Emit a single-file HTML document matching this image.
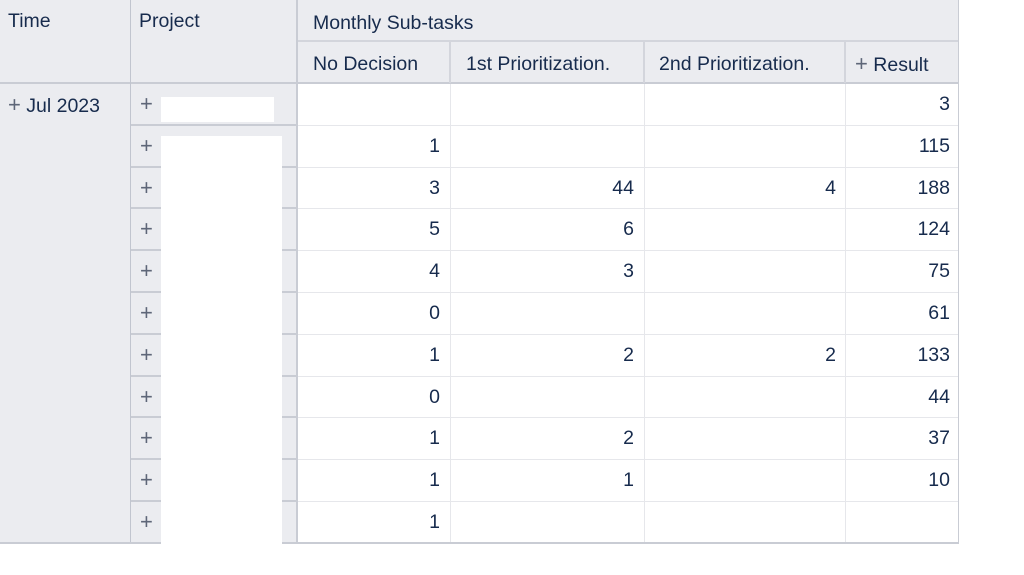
<!DOCTYPE html>
<html><head><style>
body{margin:0;width:1024px;height:575px;background:#fff;font-family:"Liberation Sans",sans-serif;color:#172b4d;position:relative;overflow:hidden}
div{position:absolute;box-sizing:border-box}
.t{font-size:19.5px;line-height:22px;white-space:nowrap}
.n{font-size:19.5px;line-height:22px;text-align:right;white-space:nowrap}
.p{font-size:22px;color:#5e6678;line-height:22px;font-weight:300}
</style></head><body>
<div style="left:0;top:0;width:296px;height:544px;background:#ebecf0"></div>
<div style="left:296px;top:0;width:663px;height:83px;background:#ebecf0"></div>
<div style="left:0;top:82px;width:959px;height:2px;background:#c9ccd4"></div>
<div style="left:296px;top:40px;width:663px;height:2px;background:#d3d5dc"></div>
<div style="left:130px;top:0;width:1px;height:544px;background:#c1c5cf"></div>
<div style="left:296px;top:0;width:2px;height:544px;background:#c9ccd4"></div>
<div style="left:958px;top:0;width:1px;height:544px;background:#c9ccd4"></div>
<div style="left:449px;top:41px;width:2px;height:42px;background:#d3d5dc"></div>
<div style="left:643px;top:41px;width:2px;height:42px;background:#d3d5dc"></div>
<div style="left:844px;top:41px;width:2px;height:42px;background:#d3d5dc"></div>
<div style="left:450px;top:84px;width:1px;height:459px;background:#e6e7eb"></div>
<div style="left:644px;top:84px;width:1px;height:459px;background:#e6e7eb"></div>
<div style="left:845px;top:84px;width:1px;height:459px;background:#e6e7eb"></div>
<div style="left:0;top:542px;width:959px;height:2px;background:#c9ccd4"></div>
<div id="rows"></div>
<div class="t" style="left:8px;top:10px">Time</div>
<div class="t" style="left:139px;top:10px">Project</div>
<div class="t" style="left:313px;top:12px">Monthly Sub-tasks</div>
<div class="t" style="left:313px;top:53px">No Decision</div>
<div class="t" style="left:466px;top:53px">1st Prioritization.</div>
<div class="t" style="left:659px;top:53px">2nd Prioritization.</div>
<div class="t" style="left:855px;top:53px"><span class="p">+</span> Result</div>
<div class="t" style="left:8px;top:94px"><span class="p">+</span> Jul 2023</div>
<script>
var d=[["","","","3"],["1","","","115"],["3","44","4","188"],["5","6","","124"],["4","3","","75"],["0","","","61"],["1","2","2","133"],["0","","","44"],["1","2","","37"],["1","1","","10"],["1","","",""]];
var h='',rh=41.8,x=[[298,440],[451,634],[645,836],[846,950]];
for(var i=0;i<11;i++){var y=83+i*rh;
 if(i>0){h+='<div style="left:131px;top:'+(y-1)+'px;width:165px;height:2px;background:#c9ccd4"></div>';
 h+='<div style="left:298px;top:'+y+'px;width:660px;height:1px;background:#e6e7eb"></div>';}
 h+='<div class="p" style="left:140px;top:'+(y+10)+'px">+</div>';
 for(var j=0;j<4;j++){h+='<div class="n" style="left:'+x[j][0]+'px;width:'+(x[j][1]-x[j][0])+'px;top:'+(y+10)+'px">'+d[i][j]+'</div>';}
}
h+='<div style="left:161px;top:97px;width:113px;height:25px;background:#fff"></div>';
h+='<div style="left:161px;top:136px;width:121px;height:408px;background:#fff"></div>';
document.getElementById('rows').outerHTML=h;
</script>
</body></html>
